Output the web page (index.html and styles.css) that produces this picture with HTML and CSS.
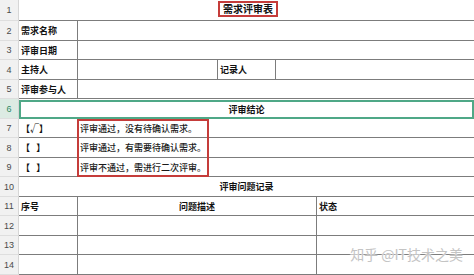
FILE: index.html
```html
<!DOCTYPE html>
<html lang="zh">
<head>
<meta charset="utf-8">
<title>需求评审表</title>
<link rel="stylesheet" href="styles.css">
</head>
<body>
<div class="sheet">
  <div class="rh r1">1</div>
  <div class="c r1 span-all center"><span class="title">需求评审表</span></div>

  <div class="rh r2">2</div>
  <div class="c r2 colA b">需求名称</div>
  <div class="c r2 col-rest vl"></div>

  <div class="rh r3">3</div>
  <div class="c r3 colA b">评审日期</div>
  <div class="c r3 col-rest vl"></div>

  <div class="rh r4">4</div>
  <div class="c r4 colA b">主持人</div>
  <div class="c r4 colB vl"></div>
  <div class="c r4 colC vl b">记录人</div>
  <div class="c r4 colD vl"></div>

  <div class="rh r5">5</div>
  <div class="c r5 colA b">评审参与人</div>
  <div class="c r5 col-rest vl"></div>

  <div class="rh r6 sel">6</div>
  <div class="c r6 span-all center b active">评审结论</div>

  <div class="rh r7">7</div>
  <div class="c r7 colA b">【√】</div>
  <div class="c r7 col-rest vl txt">评审通过，没有待确认需求。</div>

  <div class="rh r8">8</div>
  <div class="c r8 colA b">【&nbsp;&nbsp;&nbsp;】</div>
  <div class="c r8 col-rest vl txt">评审通过，有需要待确认需求。</div>

  <div class="rh r9">9</div>
  <div class="c r9 colA b">【&nbsp;&nbsp;&nbsp;】</div>
  <div class="c r9 col-rest vl txt">评审不通过，需进行二次评审。</div>

  <div class="mark"><div class="mark-box"></div></div>

  <div class="rh r10">10</div>
  <div class="c r10 span-all center b">评审问题记录</div>

  <div class="rh r11">11</div>
  <div class="c r11 colA b">序号</div>
  <div class="c r11 colDesc vl center b">问题描述</div>
  <div class="c r11 colState vl b">状态</div>

  <div class="rh r12">12</div>
  <div class="c r12 colA"></div>
  <div class="c r12 colDesc vl"></div>
  <div class="c r12 colState vl"></div>

  <div class="rh r13">13</div>
  <div class="c r13 colA"></div>
  <div class="c r13 colDesc vl"></div>
  <div class="c r13 colState vl"></div>

  <div class="rh r14">14</div>
  <div class="c r14 colA"></div>
  <div class="c r14 colDesc vl"></div>
  <div class="c r14 colState vl"></div>

  <div class="watermark">知乎 @IT技术之美</div>
</div>
</body>
</html>
```

FILE: styles.css
```css
* { box-sizing: border-box; }
html, body { margin: 0; padding: 0; background: #fff; }
body { width: 474px; height: 275px; overflow: hidden; }

.sheet {
  position: relative;
  display: grid;
  grid-template-columns: 19px 58px 140px 58px 41px 158px;
  grid-template-rows: 21px 20px 19px 20px 19px 20px 19px 20px 19px 20px 19px 20px 19px 20px;
  font-family: "Noto Sans CJK SC", "Noto Sans", sans-serif;
  font-size: 9px;
  color: #111;
}

.rh {
  grid-column: 1 / 2;
  background: #f1f1f1;
  border-right: 1px solid #d6d6d6;
  border-bottom: 1px solid #dedede;
  color: #4a4a4a;
  font-family: "Liberation Sans", "DejaVu Sans", sans-serif;
  font-size: 9px;
  display: flex;
  align-items: center;
  justify-content: center;
}
.rh.sel { background: #dcebe3; color: #2f8a63; }

.r1 { grid-row: 1; } .r2 { grid-row: 2; } .r3 { grid-row: 3; } .r4 { grid-row: 4; }
.r5 { grid-row: 5; } .r6 { grid-row: 6; } .r7 { grid-row: 7; } .r8 { grid-row: 8; }
.r9 { grid-row: 9; } .r10 { grid-row: 10; } .r11 { grid-row: 11; } .r12 { grid-row: 12; }
.r13 { grid-row: 13; } .r14 { grid-row: 14; }

.c {
  border-bottom: 1px solid #7c7c7c;
  display: flex;
  align-items: center;
  padding-left: 2px;
  white-space: nowrap;
  line-height: 1;
}
.b { font-weight: 700; }
.txt { font-weight: 500; color: #1a1a1a; }
.center { justify-content: center; padding-left: 0; }
.vl { border-left: 1px solid #7c7c7c; }

.span-all { grid-column: 2 / 7; }
.colA { grid-column: 2 / 3; }
.col-rest { grid-column: 3 / 7; }
.colB { grid-column: 3 / 4; }
.colC { grid-column: 4 / 5; }
.colD { grid-column: 5 / 7; }
.colDesc { grid-column: 3 / 6; }
.colState { grid-column: 6 / 7; }

.title {
  display: inline-block;
  border: 2px solid #c53c3a;
  padding: 1px 3px;
  font-size: 10px;
  font-weight: 700;
  line-height: 10px;
  margin-left: 3px;
  margin-bottom: 2px;
}

.active {
  border: 2px solid #4fa887;
  margin-top: 1px;
}

.mark {
  grid-column: 3 / 7;
  grid-row: 7 / 10;
  pointer-events: none;
}
.mark-box {
  width: 132px;
  height: 100%;
  border: 2px solid #c53c3a;
}

.watermark {
  position: absolute;
  right: 11px;
  bottom: 11px;
  font-size: 14px;
  color: #c4c4c4;
  text-shadow: 0 0 1px #fff, 0 0 2px #fff;
  font-family: "Noto Sans CJK SC", sans-serif;
}
```
